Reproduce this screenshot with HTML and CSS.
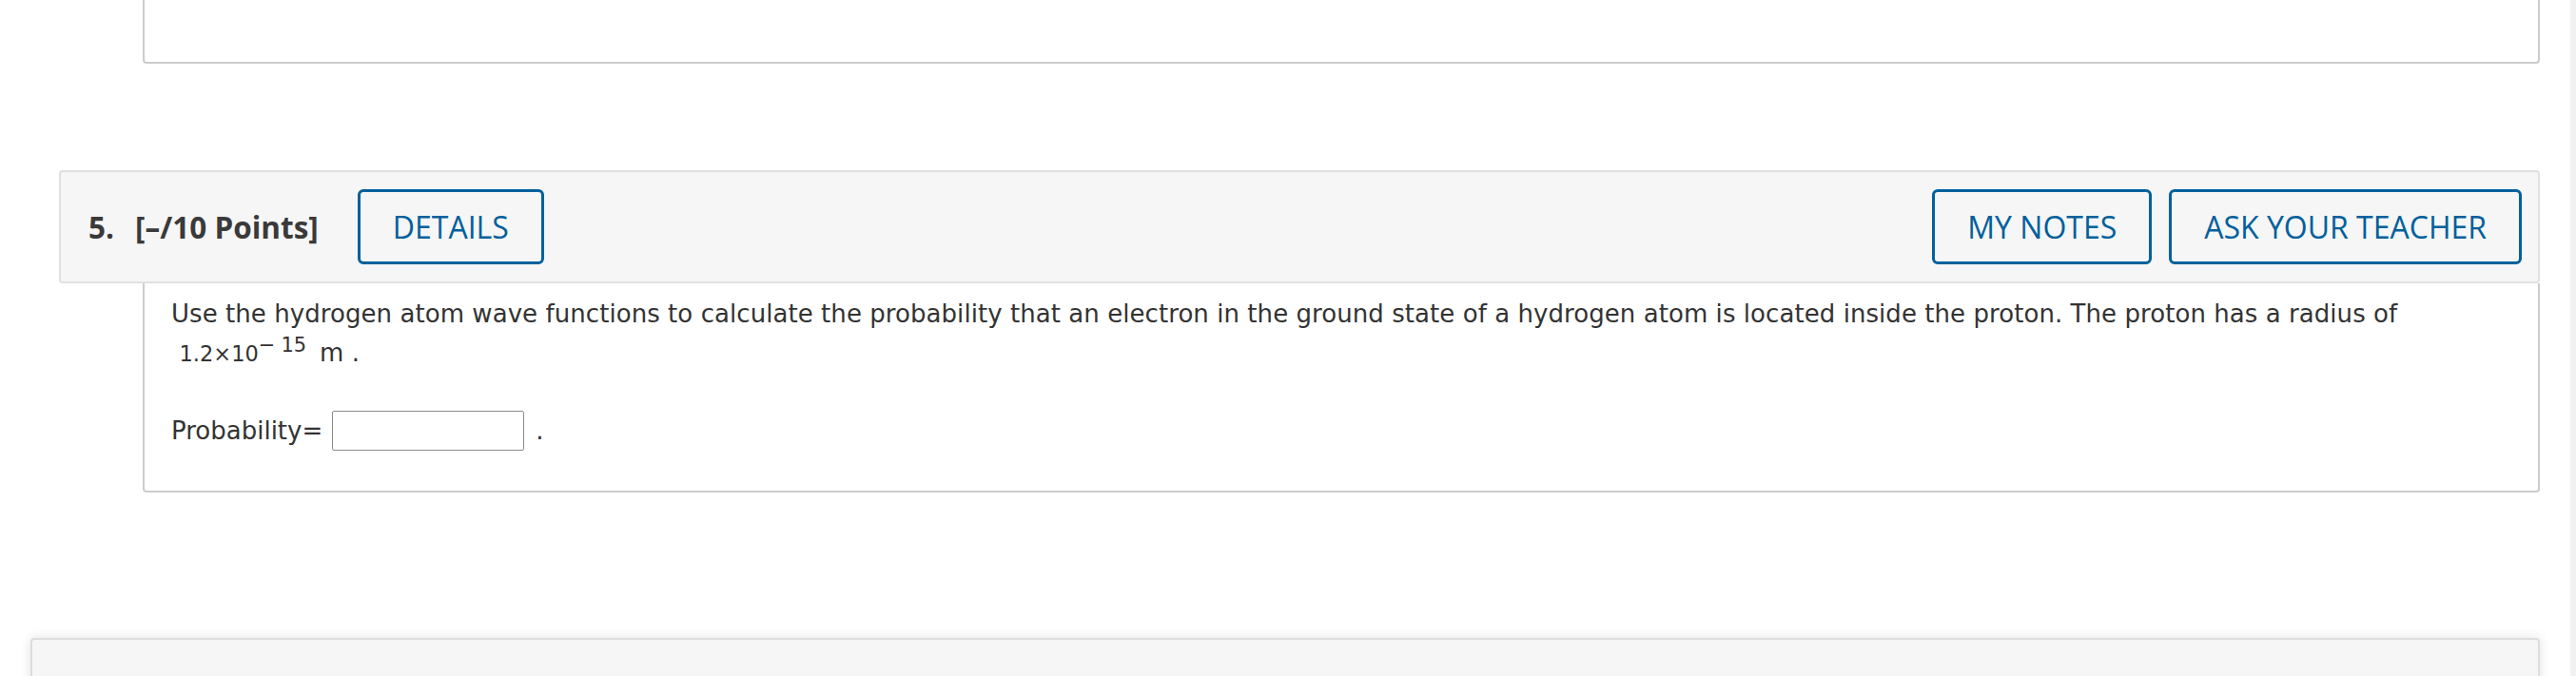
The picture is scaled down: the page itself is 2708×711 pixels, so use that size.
FILE: index.html
```html
<!DOCTYPE html>
<html lang="en">
<head>
<meta charset="utf-8">
<title>Question 5</title>
<link rel="stylesheet" href="styles.css">
</head>
<body>
<div class="page">
  <main class="main">
    <div class="prev-box"></div>
    <section class="question">
      <header class="q-head">
        <div class="q-title">
          <span class="q-num">5.</span>
          <span class="q-points">[–/10 Points]</span>
          <button class="btn" type="button">DETAILS</button>
        </div>
        <div class="q-actions">
          <button class="btn" type="button">MY NOTES</button>
          <button class="btn" type="button">ASK YOUR TEACHER</button>
        </div>
      </header>
      <div class="q-body">
        <p class="q-text">Use the hydrogen atom wave functions to calculate the probability that an electron in the ground state of a hydrogen atom is located inside the proton. The proton has a radius of <span class="math"><span class="mant">1.2×10</span><sup class="exp"><span class="minus">−</span>15</sup><span class="unit">m</span></span> .</p>
        <div class="answer-row">
          <span class="label">Probability=</span>
          <input class="answer" type="text" aria-label="Probability">
          <span class="dot">.</span>
        </div>
      </div>
    </section>
    <div class="next-card"></div>
  </main>
  <div class="scrollbar"></div>
</div>
</body>
</html>
```

FILE: styles.css
```css
html, body {
  margin: 0;
  padding: 0;
  background: #ffffff;
}

body {
  font-family: "DejaVu Sans", Verdana, sans-serif;
  color: #333333;
  height: 711px;
  overflow: hidden;
}

.page {
  display: flex;
  height: 711px;
  overflow: hidden;
}

.main {
  flex: 1;
  min-width: 0;
  padding: 0 32px;
}

.scrollbar {
  flex: none;
  width: 6px;
  background: #f1f1f1;
}

.prev-box {
  margin-left: 118px;
  height: 65px;
  border: 2px solid #cccccc;
  border-top: none;
  border-radius: 0 0 4px 4px;
}

.question {
  margin-top: 112px;
  margin-left: 30px;
}

.q-head {
  display: flex;
  justify-content: space-between;
  align-items: center;
  box-sizing: border-box;
  height: 119px;
  padding: 0 17px 0 29px;
  background: #f6f6f6;
  border: 2px solid #e0e0e0;
  border-radius: 4px;
}

.q-title {
  display: flex;
  align-items: center;
  font-family: "Open Sans", "Liberation Sans", sans-serif;
  font-weight: 700;
  font-size: 31.5px;
  color: #3a3a3a;
}

.q-num {
  margin-right: 22px;
}

.q-points {
  margin-right: 41px;
}

.q-actions {
  display: flex;
  gap: 18px;
}

.btn {
  box-sizing: border-box;
  height: 79px;
  padding: 0 34px;
  font-family: "Open Sans", "Liberation Sans", sans-serif;
  font-weight: 400;
  font-size: 32px;
  color: #00609c;
  background: transparent;
  border: 3px solid #00609c;
  border-radius: 6px;
}

.q-body {
  margin-left: 88px;
  padding: 11.5px 28px 42px 28px;
  border: 2px solid #cccccc;
  border-top: none;
  border-radius: 0 0 4px 4px;
}

.q-text {
  margin: 0;
  font-size: 26px;
  line-height: 41px;
  letter-spacing: 0.06px;
}

.math {
  margin-left: 8.5px;
  white-space: nowrap;
  letter-spacing: 0;
}

.mant {
  font-size: 22.5px;
}

.exp {
  font-size: 21px;
  line-height: 0;
  vertical-align: 10px;
  margin-right: 14px;
}

.minus {
  margin-right: 6px;
}

.unit {
  font-size: 26px;
}

.answer-row {
  display: flex;
  align-items: center;
  height: 42px;
  margin-top: 39px;
  font-size: 26px;
}

.label {
  line-height: 42px;
}

.answer {
  box-sizing: border-box;
  width: 202px;
  height: 42px;
  margin: 0 12px 0 10px;
  padding: 0;
  border: 1px solid #8b8b8b;
  border-radius: 2px;
  background: #ffffff;
}

.dot {
  line-height: 42px;
}

.next-card {
  margin-top: 153px;
  height: 120px;
  background: #f6f6f6;
  border: 2px solid #dddddd;
  border-radius: 4px;
  box-shadow: 0 0 12px rgba(0, 0, 0, 0.12);
}
```
